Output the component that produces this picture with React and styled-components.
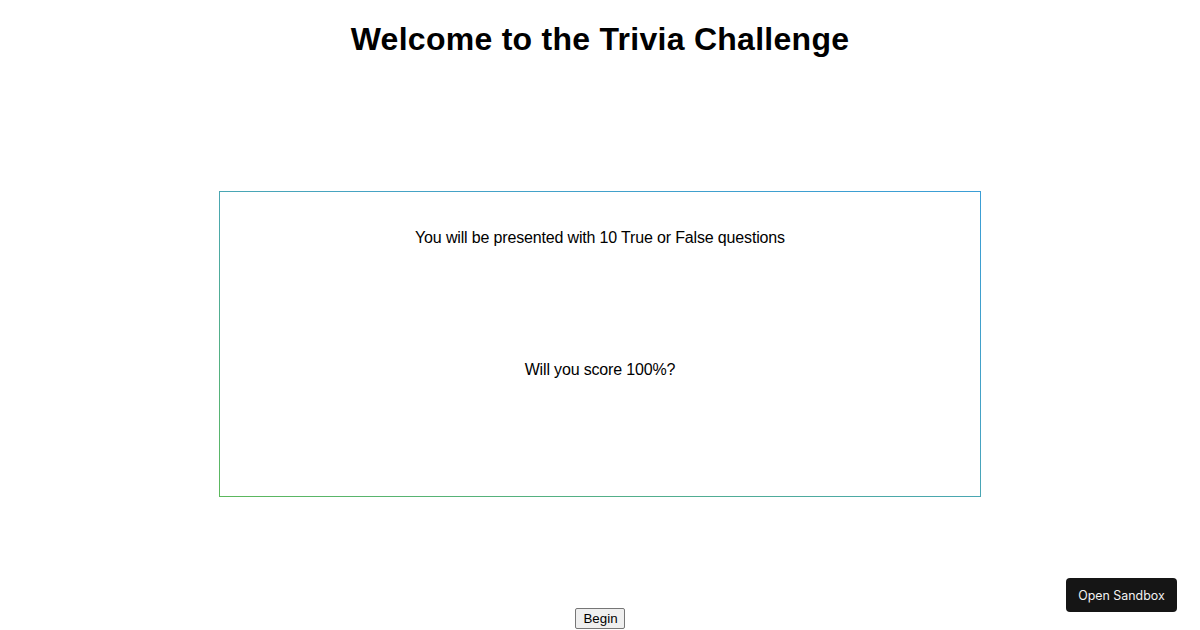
import React from "react";
import styled, { createGlobalStyle } from "styled-components";

const Global = createGlobalStyle`
  html, body { margin: 0; padding: 0; background: #fff; }
  body { font-family: "Liberation Sans", Arial, sans-serif; color: #000; }
`;

const Page = styled.main`
  display: flex;
  flex-direction: column;
  align-items: center;
  min-height: 630px;
`;

const Title = styled.h1`
  margin: 21px 0 0;
  font-size: 32px;
  line-height: 37px;
  font-weight: 700;
  letter-spacing: 0.27px;
  text-align: center;
`;

const Card = styled.section`
  box-sizing: border-box;
  width: 762px;
  height: 306px;
  margin-top: 133px;
  border: 1px solid;
  border-image: linear-gradient(to top right, #5cb85c 0%, #46a3c4 60%, #3b9ed6 100%) 1;
  display: flex;
  flex-direction: column;
  align-items: center;
`;

const Line = styled.p`
  margin: ${(p) => p.$top}px 0 0;
  font-size: 16px;
  line-height: 18px;
  letter-spacing: -0.16px;
  text-align: center;
`;

const BeginButton = styled.button`
  margin-top: 111px;
  font-family: "Liberation Sans", Arial, sans-serif;
  font-size: 13.33px;
  line-height: 15px;
  padding: 2px 6px 2px 7px;
  background: #efefef;
  color: #000;
  border: 1px solid #767676;
  border-radius: 2px;
  cursor: pointer;
`;

const SandboxButton = styled.button`
  position: fixed;
  right: 23px;
  bottom: 18px;
  width: 111px;
  height: 34px;
  background: #151515;
  color: #f2f2f2;
  border: none;
  border-radius: 4px;
  font-family: Inter, "Liberation Sans", sans-serif;
  font-size: 12.4px;
  cursor: pointer;
`;

export default function App() {
  return (
    <>
      <Global />
      <Page>
        <Title>Welcome to the Trivia Challenge</Title>
        <Card>
          <Line $top={37}>You will be presented with 10 True or False questions</Line>
          <Line $top={114}>Will you score 100%?</Line>
        </Card>
        <BeginButton>Begin</BeginButton>
      </Page>
      <SandboxButton>Open Sandbox</SandboxButton>
    </>
  );
}
